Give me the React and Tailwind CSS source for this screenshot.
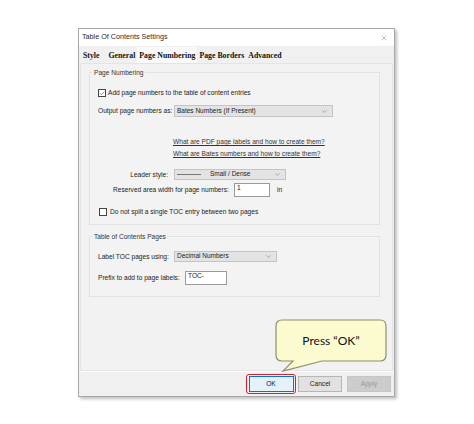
import { X, ChevronDown, Check } from "lucide-react";

const ui = { fontFamily: '"Liberation Sans", Arial, sans-serif' };
const tabFont = { fontFamily: '"Liberation Serif", "Times New Roman", serif' };

function Select({ width, children }) {
  return (
    <div
      className="flex items-center justify-between border border-[#c4c4c4] bg-[#e3e3e3] pl-[2px] pr-[4px]"
      style={{ width }}
    >
      <div className="flex items-center gap-[6px] text-[6.5px] leading-none text-[#222]">{children}</div>
      <ChevronDown size={7} strokeWidth={1.5} className="text-[#555]" />
    </div>
  );
}

function Checkbox({ checked }) {
  return (
    <div className="flex h-[8px] w-[8px] items-center justify-center border border-[#444] bg-white">
      {checked && <Check size={7} strokeWidth={2} className="text-[#222]" />}
    </div>
  );
}

function Group({ title, className, children }) {
  return (
    <fieldset className={`ml-[8px] w-[291px] border border-[#e2e2e2] bg-[#f3f3f3] ${className}`}>
      <legend className="ml-[2px] px-[2px] text-[6.6px] leading-[9px] text-[#333]">{title}</legend>
      {children}
    </fieldset>
  );
}

const tabs = ["Style", "General", "Page Numbering", "Page Borders", "Advanced"];

export default function App() {
  return (
    <div className="h-[424px] w-[474px] bg-white pl-[78px] pt-[28px]" style={ui}>
      <div className="relative flex h-[369px] w-[317px] flex-col border border-[#a8a8a8] bg-[#f0f0f0] shadow-[2px_2px_3px_rgba(0,0,0,0.25)]">
        {/* title bar */}
        <div className="flex h-[17px] items-center justify-between bg-white pl-[3px] pr-[6px]">
          <span className="text-[7.2px] text-[#2a2a2a]">Table Of Contents Settings</span>
          <X size={8} strokeWidth={1.2} className="text-[#555]" />
        </div>

        {/* tabs */}
        <div className="flex h-[17px] items-end pl-[4px] text-[7.8px] font-bold text-[#111]" style={tabFont}>
          {tabs.map((t) =>
            t === "Page Numbering" ? (
              <div key={t} className="flex h-[16px] items-start bg-[#fafafa] px-[2px] pt-[3px]">
                {t}
              </div>
            ) : (
              <div key={t} className={`flex h-[14px] items-center ${t === "Style" ? "pr-[7px]" : "px-[2px]"}`}>
                {t}
              </div>
            )
          )}
        </div>

        {/* tab page */}
        <div className="mx-[1px] flex flex-1 flex-col border border-[#e4e4e4] bg-[#f2f2f2] pt-[4px] text-[6.6px] text-[#222]">
          <Group title="Page Numbering" className="pb-[7px]">
            <div className="mt-[11px] flex h-[10px] items-center gap-[2px] pl-[8px]">
              <Checkbox checked />
              <span>Add page numbers to the table of content entries</span>
            </div>
            <div className="mt-[7px] flex h-[12px] items-center pl-[8px]">
              <span className="w-[76px]">Output page numbers as:</span>
              <div className="flex h-[12px]">
                <Select width={159}>
                  <span>Bates Numbers (If Present)</span>
                </Select>
              </div>
            </div>
            <div className="mt-[20px] flex flex-col gap-[3px] pl-[83px] leading-[9px] text-[#333]">
              <span className="underline">What are PDF page labels and how to create them?</span>
              <span className="underline">What are Bates numbers and how to create them?</span>
            </div>
            <div className="mt-[11px] flex h-[11px] items-center pl-[8px]">
              <span className="w-[70px] text-right">Leader style:</span>
              <div className="ml-[6px] flex h-[11px]">
                <Select width={112}>
                  <span className="w-[24px] border-t border-[#777]" />
                  <span className="ml-[3px]">Small / Dense</span>
                </Select>
              </div>
            </div>
            <div className="mt-[3px] flex h-[14px] items-center pl-[23px]">
              <span className="w-[121px]">Reserved area width for page numbers:</span>
              <div className="h-[14px] w-[36px] border border-[#9a9a9a] bg-white pl-[2px] leading-[8px]">1</div>
              <span className="ml-[7px]">in</span>
            </div>
            <div className="mt-[10px] flex h-[10px] items-center gap-[3px] pl-[9px]">
              <Checkbox />
              <span>Do not split a single TOC entry between two pages</span>
            </div>
          </Group>

          <Group title="Table of Contents Pages" className="mt-[7px] pb-[11px]">
            <div className="mt-[10px] flex h-[11px] items-center pl-[8px]">
              <span className="w-[76px]">Label TOC pages using:</span>
              <div className="flex h-[11px]">
                <Select width={103}>
                  <span>Decimal Numbers</span>
                </Select>
              </div>
            </div>
            <div className="mt-[9px] flex h-[14px] items-center pl-[8px]">
              <span className="w-[87px]">Prefix to add to page labels:</span>
              <div className="h-[14px] w-[42px] border border-[#9a9a9a] bg-white pl-[2px] leading-[8px]">TOC-</div>
            </div>
          </Group>
        </div>

        {/* button bar */}
        <div className="flex h-[25px] items-center justify-end border-t border-white pr-[3px] text-[6.6px]">
          <div className="flex h-[20px] w-[50px] items-center justify-center rounded-[3px] border-[1.5px] border-[#d3202e]">
            <div className="flex h-[16px] w-[45px] items-center justify-center border border-[#0078d7] bg-[#e5f1fb] text-[#111]">
              OK
            </div>
          </div>
          <div className="ml-[2px] flex h-[16px] w-[44px] items-center justify-center border border-[#b5b5b5] bg-[#e1e1e1] text-[#222]">
            Cancel
          </div>
          <div className="ml-[5px] flex h-[16px] w-[44px] items-center justify-center border border-[#c6c6c6] bg-[#cccccc] text-[#9a9a9a]">
            Apply
          </div>
        </div>

        {/* callout */}
        <div className="absolute left-[196px] top-[290px] h-[54px] w-[113px]">
          <svg width="113" height="54" viewBox="0 0 113 54" className="absolute left-0 top-0">
            <path
              d="M7,1 H105 Q111,1 111,7 V36 Q111,42 105,42 H47 L8,52 L18,42 H7 Q1,42 1,36 V7 Q1,1 7,1 Z"
              fill="#fbfbcf"
              stroke="#8e8e6e"
              strokeWidth="1.2"
            />
          </svg>
          <div
            className="absolute left-0 top-0 flex h-[43px] w-[112px] items-center justify-center text-[12px] text-[#111]"
            style={{ fontFamily: 'Lato, "Liberation Sans", sans-serif' }}
          >
            Press “OK”
          </div>
        </div>
      </div>
    </div>
  );
}
